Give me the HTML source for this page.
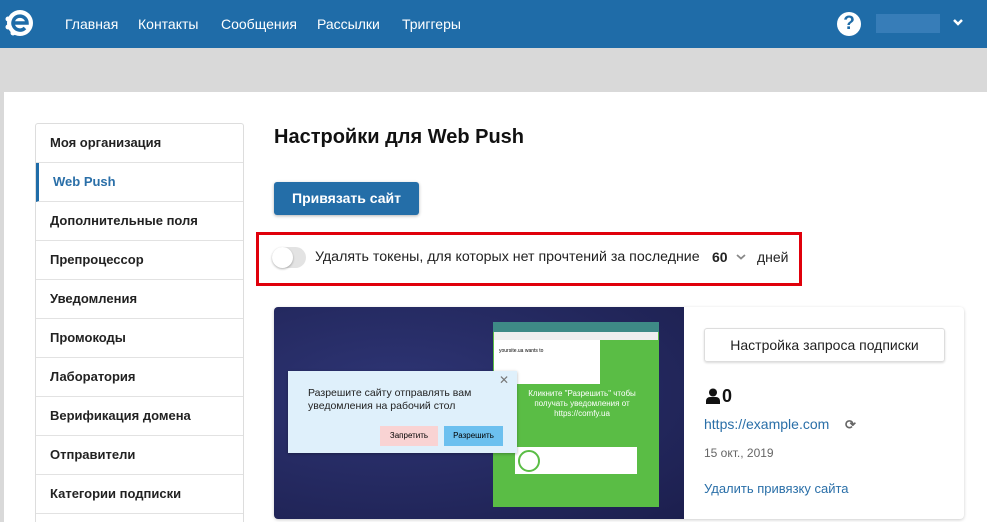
<!DOCTYPE html>
<html style="width:987px;height:522px;overflow:hidden"><head><meta charset="utf-8"><style>
*{box-sizing:border-box;margin:0;padding:0}
body{width:987px;height:522px;overflow:hidden;background:#d9d9d9;font-family:"Liberation Sans",Arial,sans-serif;position:relative}
.hdr{position:absolute;left:0;top:0;width:987px;height:48px;background:#1f6ca8;color:#fff}
.hdr .nav{position:absolute;top:16px;font-size:14px}
.main{position:absolute;left:4px;top:92px;width:983px;height:430px;background:#fff}
.side{position:absolute;left:35px;top:123px;width:209px;height:399px;overflow:hidden;border:1px solid #ddd;border-bottom:none;border-radius:3px 3px 0 0;background:#fff}
.side div{height:39px;border-bottom:1px solid #e2e2e2;font-size:13px;font-weight:bold;color:#222;padding:11px 0 0 14px}
.side div.act{color:#2a6fa8;border-left:3px solid #1f6ca8;padding-left:14px}
.abs{position:absolute}
</style></head><body>
<div class="hdr">
 <svg class="abs" style="left:3px;top:8px" width="32" height="30" viewBox="0 0 32 30"><circle cx="17" cy="15" r="13" fill="#fff"/><path d="M11 15h13a7 7 0 1 0-2 5" stroke="#1f6ca8" stroke-width="3.5" fill="none"/><circle cx="5" cy="11" r="2.5" fill="#fff"/><circle cx="5" cy="19" r="2.5" fill="#fff"/><circle cx="10" cy="25" r="2.5" fill="#fff"/></svg>
 <span class="nav" style="left:65px">Главная</span>
 <span class="nav" style="left:138px">Контакты</span>
 <span class="nav" style="left:221px">Сообщения</span>
 <span class="nav" style="left:317px">Рассылки</span>
 <span class="nav" style="left:402px">Триггеры</span>
 <div class="abs" style="left:837px;top:12px;width:24px;height:24px;border-radius:50%;background:#fff;color:#1f6ca8;font-weight:bold;font-size:19px;text-align:center;line-height:24px">?</div>
 <div class="abs" style="left:876px;top:14px;width:64px;height:19px;background:#3d82bb;opacity:.8"></div>
 <svg class="abs" style="left:952px;top:18px" width="12" height="10" viewBox="0 0 12 10"><path d="M2 2l4 4 4-4" stroke="#fff" stroke-width="2.5" fill="none"/></svg>
</div>
<div class="main"></div>
<div class="side">
 <div>Моя организация</div><div class="act">Web Push</div><div>Дополнительные поля</div><div>Препроцессор</div><div>Уведомления</div><div>Промокоды</div><div>Лаборатория</div><div>Верификация домена</div><div>Отправители</div><div>Категории подписки</div><div></div>
</div>
<div class="abs" style="left:274px;top:126px;font-size:20px;font-weight:bold;color:#111">Настройки для Web Push</div>
<div class="abs" style="left:274px;top:182px;width:145px;height:33px;background:#246ea8;border-radius:3px;color:#fff;font-size:14px;font-weight:bold;text-align:center;line-height:33px;box-shadow:0 1px 3px rgba(0,0,0,.3)">Привязать сайт</div>
<div class="abs" style="left:256px;top:232px;width:546px;height:54px;border:3px solid #e0000b"></div>
<div class="abs" style="left:272px;top:247px;width:34px;height:21px;border-radius:11px;background:#e3e3e3"><div style="width:21px;height:21px;border-radius:50%;background:#fff;box-shadow:0 1px 2px rgba(0,0,0,.3)"></div></div>
<div class="abs" style="left:315px;top:249px;font-size:14.2px;color:#222">Удалять токены, для которых нет прочтений за последние</div>
<div class="abs" style="left:712px;top:249px;font-size:14px;font-weight:bold;color:#222">60</div>
<svg class="abs" style="left:736px;top:253px" width="10" height="8"><path d="M1 2l4 3.5 4-3.5" stroke="#888" stroke-width="1.8" fill="none"/></svg>
<div class="abs" style="left:757px;top:249px;font-size:14px;color:#222">дней</div>
<div class="abs" style="left:274px;top:307px;width:690px;height:212px;border-radius:4px;box-shadow:0 1px 3px rgba(0,0,0,.2);background:#fff;overflow:hidden">
 <div class="abs" style="left:0;top:0;width:410px;height:212px;background:radial-gradient(ellipse at 30% 40%,#2e3575,#1c1f4e)"></div>
 <div class="abs" style="left:219px;top:15px;width:166px;height:185px;background:#5abd45"></div>
 <div class="abs" style="left:219px;top:15px;width:166px;height:10px;background:#3e8a86"></div>
 <div class="abs" style="left:220px;top:25px;width:164px;height:8px;background:#eee"></div>
 <div class="abs" style="left:220px;top:33px;width:106px;height:44px;background:#fff;font-size:5px;padding:8px 5px">yoursite.ua wants to</div>
 <div class="abs" style="left:243px;top:82px;width:130px;text-align:center;color:#fff;font-size:8px;line-height:10px">Кликните "Разрешить" чтобы получать уведомления от https://comfy.ua</div>
 <div class="abs" style="left:241px;top:140px;width:122px;height:27px;background:#fff"><div style="margin:3px;width:22px;height:22px;border-radius:50%;border:2px solid #5abd45"></div></div>
 <div class="abs" style="left:14px;top:64px;width:229px;height:82px;background:#dff0fb;box-shadow:0 1px 3px rgba(0,0,0,.3)">
  <div class="abs" style="left:20px;top:16px;font-size:10.5px;color:#222;line-height:13px">Разрешите сайту  отправлять вам<br>уведомления на рабочий стол</div>
  <div class="abs" style="right:8px;top:2px;font-size:12px;color:#777">✕</div>
  <div class="abs" style="left:92px;top:55px;width:58px;height:20px;background:#f9d3d3;font-size:8px;text-align:center;line-height:20px">Запретить</div>
  <div class="abs" style="left:156px;top:55px;width:59px;height:20px;background:#6cc0ef;font-size:8px;text-align:center;line-height:20px">Разрешить</div>
 </div>
 <div class="abs" style="left:430px;top:21px;width:241px;height:34px;border:1px solid #ddd;border-radius:3px;box-shadow:0 1px 2px rgba(0,0,0,.15);font-size:14px;color:#222;text-align:center;line-height:32px">Настройка запроса подписки</div>
 <svg class="abs" style="left:432px;top:81px" width="14" height="16" viewBox="0 0 14 16"><circle cx="7" cy="4.5" r="4" fill="#111"/><path d="M0 16v-3a4 4 0 0 1 4-4h6a4 4 0 0 1 4 4v3z" fill="#111"/></svg>
 <div class="abs" style="left:448px;top:79px;font-size:18px;font-weight:bold;color:#111">0</div>
 <div class="abs" style="left:430px;top:109px;font-size:14px;color:#2a6fa8">https://example.com</div>
 <div class="abs" style="left:571px;top:110px;font-size:13px;color:#666;font-weight:bold">⟳</div>
 <div class="abs" style="left:430px;top:139px;font-size:12px;color:#666">15 окт., 2019</div>
 <div class="abs" style="left:430px;top:174px;font-size:13px;color:#2a6fa8">Удалить привязку сайта</div>
</div>
</body></html>
